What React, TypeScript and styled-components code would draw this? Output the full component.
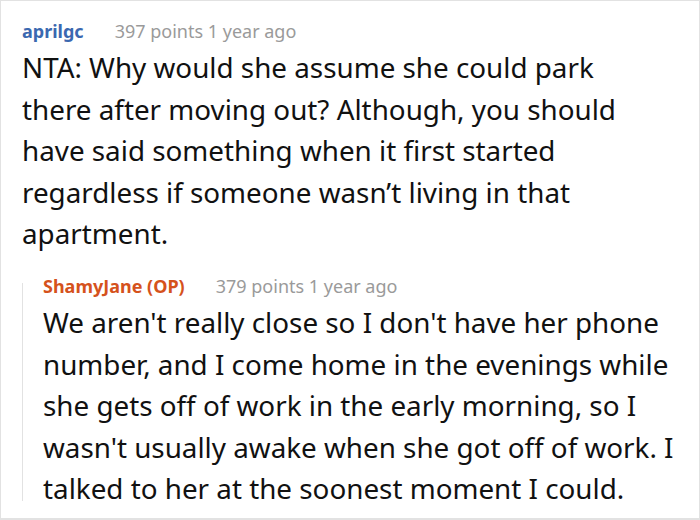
import { createGlobalStyle, styled } from 'styled-components';

const GlobalStyle = createGlobalStyle`
  html, body {
    margin: 0;
    padding: 0;
    background: #ffffff;
  }
  body {
    font-family: "Noto Sans", "Open Sans", sans-serif;
  }
`;

type Reply = {
  author: string;
  isOp?: boolean;
  points: number;
  age: string;
  text: string;
};

const comment: Reply = {
  author: 'aprilgc',
  points: 397,
  age: '1 year ago',
  text: 'NTA: Why would she assume she could park there after moving out? Although, you should have said something when it first started regardless if someone wasn\u2019t living in that apartment.',
};

const reply: Reply = {
  author: 'ShamyJane (OP)',
  isOp: true,
  points: 379,
  age: '1 year ago',
  text: "We aren't really close so I don't have her phone number, and I come home in the evenings while she gets off of work in the early morning, so I wasn't usually awake when she got off of work. I talked to her at the soonest moment I could.",
};

function CommentHeader({ data }: { data: Reply }) {
  return (
    <StyledHeader>
      <StyledAuthor $op={data.isOp}>{data.author}</StyledAuthor>
      <StyledMeta>
        {data.points} points {data.age}
      </StyledMeta>
    </StyledHeader>
  );
}

export default function App() {
  return (
    <>
      <GlobalStyle />
      <StyledFrame>
        <StyledComment>
          <CommentHeader data={comment} />
          <StyledBody>{comment.text}</StyledBody>
        </StyledComment>
        <StyledReply>
          <CommentHeader data={reply} />
          <StyledBody>{reply.text}</StyledBody>
        </StyledReply>
      </StyledFrame>
    </>
  );
}

const StyledFrame = styled.div`
  box-sizing: border-box;
  width: 700px;
  height: 520px;
  overflow: hidden;

  padding: 14px 8px 0 21px;

  border: 1px solid #e2e2e2;
  border-bottom-width: 2px;
  background-color: #ffffff;
`;

const StyledComment = styled.div`
  display: flex;
  flex-direction: column;

  padding-right: 30px;
`;

const StyledReply = styled.div`
  position: relative;
  display: flex;
  flex-direction: column;

  margin-top: 15px;
  padding-left: 21px;

  /* thread line starts a little below the reply header's top */
  &::before {
    content: '';
    position: absolute;
    top: 13px;
    bottom: 9px;
    left: 0;
    width: 1px;
    background-color: #e2e2e2;
  }
`;

const StyledHeader = styled.div`
  display: flex;
  align-items: center;
  gap: 31px;

  height: 32px;
`;

const StyledAuthor = styled.span<{ $op?: boolean }>`
  color: ${({ $op }) => ($op ? '#d5521c' : '#3b68b0')};
  font-size: 18px;
  font-weight: 700;
`;

const StyledMeta = styled.span`
  color: #9a9a9a;
  font-size: 18px;
`;

const StyledBody = styled.p`
  margin: 0;

  color: #111111;
  font-size: 27.8px;
  line-height: 41.6px;
`;
